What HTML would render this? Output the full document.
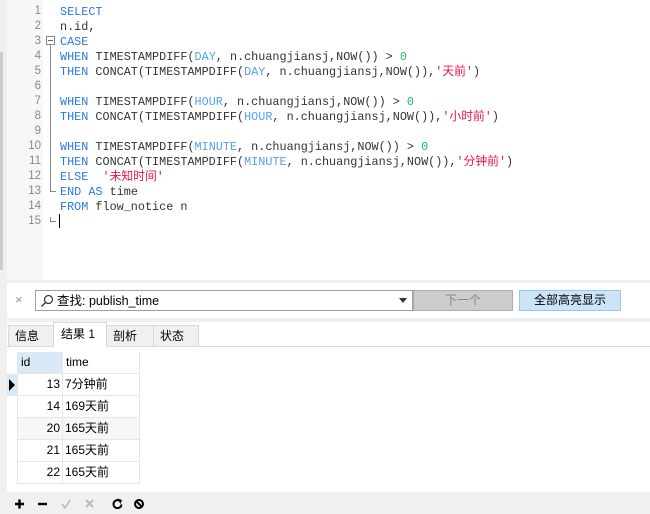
<!DOCTYPE html>
<html><head><meta charset="utf-8"><style>
*{margin:0;padding:0;box-sizing:border-box}
body{width:650px;height:514px;background:#fff;position:relative;overflow:hidden;font-family:"Liberation Sans","Noto Sans CJK SC",sans-serif;font-size:12px;color:#000}
.abs{position:absolute}
.code{font-family:"Liberation Mono","Noto Sans CJK SC",monospace;font-size:11.8px;line-height:15px;white-space:pre;color:#333}
.k{color:#2a7ae2}.u{color:#55a0ef}.s{color:#f0124a}.n{color:#1bc26b}
.ln{color:#888;text-align:right;width:34px;font-family:"Liberation Sans",sans-serif;font-size:11.5px;line-height:15px}
.tab{position:absolute;top:325px;height:21px;background:#f0f0f0;border:1px solid #d9d9d9;border-bottom:none;font-size:12px;line-height:20px;padding-left:6px}
.cell{position:absolute;height:22px;border-right:1px solid #e6e6e6;border-bottom:1px solid #e6e6e6;line-height:21px;font-size:12px}
</style></head><body>
<div class="abs" style="left:0;top:0;width:7px;height:514px;background:#f0f0f0"></div>
<div class="abs" style="left:0;top:52px;width:3px;height:218px;background:#cdcdcd"></div>
<div class="abs" style="left:7px;top:0;width:36px;height:280px;background:#f7f7f7"></div>
<div class="abs ln" style="left:7px;top:4px">1<br>2<br>3<br>4<br>5<br>6<br>7<br>8<br>9<br>10<br>11<br>12<br>13<br>14<br>15</div>
<div class="abs" style="left:46px;top:36px;width:9px;height:9px;border:1px solid #888;background:#fff"></div>
<div class="abs" style="left:48px;top:40px;width:5px;height:1px;background:#666"></div>
<div class="abs" style="left:50px;top:45px;width:1px;height:146px;background:#888"></div>
<div class="abs" style="left:50px;top:191px;width:6px;height:1px;background:#888"></div>
<div class="abs" style="left:50px;top:217px;width:1px;height:5px;background:#888"></div>
<div class="abs" style="left:50px;top:221px;width:6px;height:1px;background:#888"></div>
<div class="abs" style="left:59px;top:214px;width:1px;height:14px;background:#000"></div>
<div class="abs code" style="left:60px;top:5px"><span class="k">SELECT</span>
n.id,
<span class="k">CASE</span>
<span class="k">WHEN</span> TIMESTAMPDIFF(<span class="u">DAY</span>, n.chuangjiansj,NOW()) &gt; <span class="n">0</span>
<span class="k">THEN</span> CONCAT(TIMESTAMPDIFF(<span class="u">DAY</span>, n.chuangjiansj,NOW()),<span class="s">'天前'</span>)

<span class="k">WHEN</span> TIMESTAMPDIFF(<span class="u">HOUR</span>, n.chuangjiansj,NOW()) &gt; <span class="n">0</span>
<span class="k">THEN</span> CONCAT(TIMESTAMPDIFF(<span class="u">HOUR</span>, n.chuangjiansj,NOW()),<span class="s">'小时前'</span>)

<span class="k">WHEN</span> TIMESTAMPDIFF(<span class="u">MINUTE</span>, n.chuangjiansj,NOW()) &gt; <span class="n">0</span>
<span class="k">THEN</span> CONCAT(TIMESTAMPDIFF(<span class="u">MINUTE</span>, n.chuangjiansj,NOW()),<span class="s">'分钟前'</span>)
<span class="k">ELSE</span>  <span class="s">'未知时间'</span>
<span class="k">END</span> <span class="k">AS</span> time
<span class="k">FROM</span> flow_notice n</div>
<div class="abs" style="left:7px;top:280px;width:643px;height:3px;background:#f0f0f0"></div>
<div class="abs" style="left:15px;top:292px;color:#999;font-size:13px">×</div>
<div class="abs" style="left:35px;top:290px;width:378px;height:21px;border:1px solid #a0a0a0;background:#fff"></div>
<svg class="abs" style="left:40px;top:294px" width="14" height="14"><circle cx="8.5" cy="5.5" r="4" fill="none" stroke="#333" stroke-width="1.2"/><line x1="5.5" y1="8.5" x2="1.5" y2="12.5" stroke="#333" stroke-width="1.3"/></svg>
<div class="abs" style="left:57px;top:291px;font-size:12.5px;line-height:20px">查找: publish_time</div>
<div class="abs" style="left:399px;top:298px;width:0;height:0;border-left:4px solid transparent;border-right:4px solid transparent;border-top:5px solid #333"></div>
<div class="abs" style="left:413px;top:290px;width:100px;height:21px;background:#cccccc;border:1px solid #adadad;color:#888;text-align:center;line-height:19px">下一个</div>
<div class="abs" style="left:519px;top:290px;width:102px;height:21px;background:#cce4f7;border:1px solid #99c8ee;text-align:center;line-height:19px">全部高亮显示</div>
<div class="abs" style="left:7px;top:318px;width:643px;height:4px;background:#f0f0f0"></div>
<div class="abs" style="left:7px;top:346px;width:643px;height:1px;background:#d9d9d9"></div>
<div class="tab" style="left:8px;width:46px">信息</div>
<div class="tab" style="left:106px;width:48px">剖析</div>
<div class="tab" style="left:153px;width:46px">状态</div>
<div class="tab" style="left:53px;top:322px;height:25px;width:54px;background:#fff;padding-left:7px;line-height:22px">结果 1</div>
<div class="abs" style="left:7px;top:352px;width:11px;height:132px;border-right:1px solid #e6e6e6"></div>
<div class="cell" style="left:18px;top:352px;width:45px;background:#d9e9f8;padding-left:3px">id</div>
<div class="cell" style="left:63px;top:352px;width:77px;padding-left:3px">time</div>
<div class="abs" style="left:7px;top:374px;width:11px;height:22px;background:#d9e9f8"></div>
<div class="abs" style="left:9px;top:379px;width:0;height:0;border-top:6px solid transparent;border-bottom:6px solid transparent;border-left:6px solid #000"></div>
<div class="cell" style="left:18px;top:374px;width:45px;text-align:right;padding-right:2px">13</div><div class="cell" style="left:63px;top:374px;width:77px;padding-left:2px">7分钟前</div>
<div class="cell" style="left:18px;top:396px;width:45px;text-align:right;padding-right:2px">14</div><div class="cell" style="left:63px;top:396px;width:77px;padding-left:2px">169天前</div>
<div class="cell" style="left:18px;top:418px;width:45px;text-align:right;padding-right:2px;background:#f7f7f7">20</div><div class="cell" style="left:63px;top:418px;width:77px;padding-left:2px;background:#f7f7f7">165天前</div>
<div class="cell" style="left:18px;top:440px;width:45px;text-align:right;padding-right:2px">21</div><div class="cell" style="left:63px;top:440px;width:77px;padding-left:2px">165天前</div>
<div class="cell" style="left:18px;top:462px;width:45px;text-align:right;padding-right:2px">22</div><div class="cell" style="left:63px;top:462px;width:77px;padding-left:2px">165天前</div>
<div class="abs" style="left:0;top:492px;width:650px;height:22px;background:#f0f0f0"></div>
<svg class="abs" style="left:12px;top:497px" width="140" height="14">
<path d="M3 7h9M7.5 2.5v9" stroke="#000" stroke-width="2.4"/>
<path d="M26 7h9" stroke="#000" stroke-width="2.4"/>
<path d="M50 7l3 4 5-8" stroke="#bbb" stroke-width="1.6" fill="none"/>
<path d="M74 3l7 7M81 3l-7 7" stroke="#bbb" stroke-width="2"/>
<path d="M108 4a4 4 0 1 0 1.5 3.5" stroke="#000" stroke-width="2" fill="none"/><path d="M105.5 1.5l4.5 1.5-1.5 4z" fill="#000"/>
<circle cx="127" cy="7" r="4" stroke="#000" stroke-width="2" fill="none"/><path d="M124.5 4.5l5 5" stroke="#000" stroke-width="2"/>
</svg>
</body></html>
